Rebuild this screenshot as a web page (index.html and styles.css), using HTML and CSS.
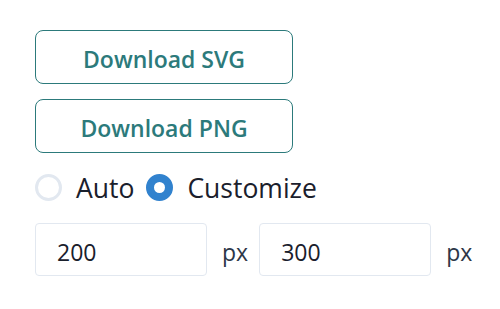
FILE: index.html
```html
<!DOCTYPE html>
<html>
<head>
<meta charset="utf-8">
<link rel="stylesheet" href="styles.css">
</head>
<body>
<div class="panel">
  <button class="btn">Download SVG</button>
  <button class="btn">Download PNG</button>
  <div class="radios">
    <label class="radio"><span class="circle"></span><span class="label">Auto</span></label>
    <label class="radio checked"><span class="circle"></span><span class="label">Customize</span></label>
  </div>
  <div class="sizes">
    <div class="input">200</div>
    <span class="unit">px</span>
    <div class="input">300</div>
    <span class="unit">px</span>
  </div>
</div>
</body>
</html>
```
FILE: styles.css
```css
html, body {
  margin: 0;
  padding: 0;
  background: #ffffff;
}
body {
  font-family: "Open Sans", "Noto Sans", sans-serif;
  color: #1a202c;
}
.panel {
  padding: 30px 0 0 35px;
  display: flex;
  flex-direction: column;
  align-items: flex-start;
}
.btn {
  width: 258px;
  height: 54px;
  box-sizing: border-box;
  border: 1.5px solid #2c7a7b;
  border-radius: 8px;
  background: #fff;
  color: #2c7a7b;
  font-family: "Open Sans", sans-serif;
  font-weight: 600;
  font-size: 23px;
  padding: 3px 0 0 0;
  margin: 0 0 15px 0;
}
.radios {
  display: flex;
  align-items: center;
  height: 34px;
  margin-top: 2px;
}
.radio {
  display: flex;
  align-items: center;
  margin-right: 12px;
}
.circle {
  width: 27px;
  height: 27px;
  box-sizing: border-box;
  border-radius: 50%;
  border: 3px solid #e2e8f0;
  display: flex;
  align-items: center;
  justify-content: center;
}
.checked .circle {
  background: #3182ce;
  border-color: #3182ce;
}
.checked .circle::before {
  content: "";
  width: 11px;
  height: 11px;
  border-radius: 50%;
  background: #fff;
}
.label {
  font-size: 26.5px;
  margin-left: 14px;
  padding-top: 1px;
}
.sizes {
  display: flex;
  align-items: center;
  margin-top: 19px;
}
.input {
  width: 172px;
  height: 53px;
  box-sizing: border-box;
  border: 1px solid #e2e8f0;
  border-radius: 4px;
  padding: 4px 0 0 21px;
  display: flex;
  align-items: center;
  font-size: 23px;
  color: #1a202c;
}
.unit {
  font-size: 23px;
  color: #2d3748;
  margin: 0 11px 0 15px;
  padding-top: 4px;
}
```
